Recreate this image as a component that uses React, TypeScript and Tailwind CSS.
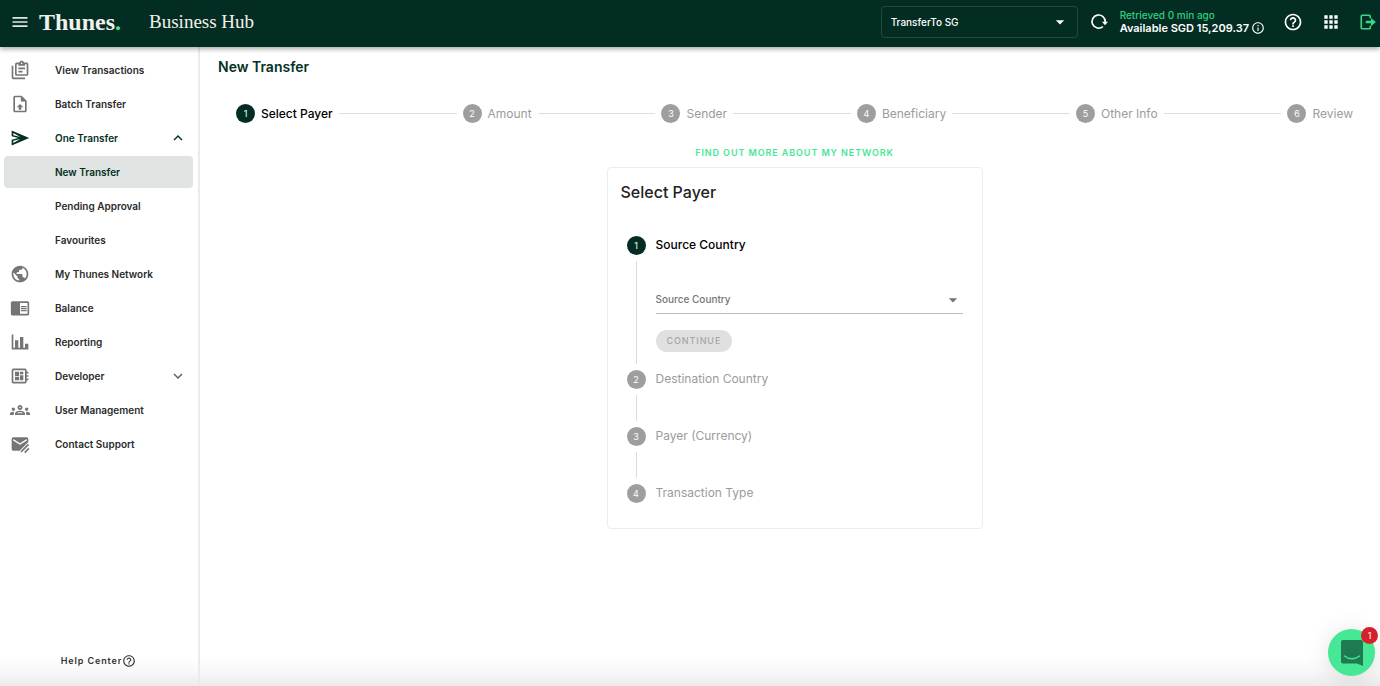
import type { ComponentType, ReactNode } from "react";
import {
  MdMenu,
  MdOutlineSend,
  MdPublic,
  MdChromeReaderMode,
  MdOutlineDeveloperBoard,
  MdOutlineGroups,
  MdApps,
  MdArrowDropDown,
  MdHelpOutline,
  MdInfoOutline,
  MdExpandLess,
  MdExpandMore,
} from "react-icons/md";

type IconProps = { className?: string };
type Icon = ComponentType<IconProps>;

function Glyph({ className, children }: IconProps & { children: ReactNode }) {
  return (
    <svg viewBox="0 0 24 24" fill="currentColor" aria-hidden="true" className={className}>
      {children}
    </svg>
  );
}

const ClipboardsIcon: Icon = ({ className }) => (
  <Glyph className={className}>
    <path d="M4,7V21H18V23H4A2,2 0 0,1 2,21V7H4M20,3A2,2 0 0,1 22,5V17A2,2 0 0,1 20,19H8A2,2 0 0,1 6,17V5A2,2 0 0,1 8,3H11.18C11.6,1.84 12.7,1 14,1C15.3,1 16.4,1.84 16.82,3H20M14,3A1,1 0 0,0 13,4A1,1 0 0,0 14,5A1,1 0 0,0 15,4A1,1 0 0,0 14,3M10,7V5H8V17H20V5H18V7M15,15H10V13H15M18,11H10V9H18V11Z" />
  </Glyph>
);

const FileUploadIcon: Icon = ({ className }) => (
  <Glyph className={className}>
    <path d="M14,2L20,8V20A2,2 0 0,1 18,22H6A2,2 0 0,1 4,20V4A2,2 0 0,1 6,2H14M18,20V9H13V4H6V20H18M12,12L16,16H13.5V19H10.5V16H8L12,12Z" />
  </Glyph>
);

const SendIcon: Icon = ({ className }) => (
  <Glyph className={className}>
    <path d="M2 3 23 12 2 21v-7l8-2-8-2ZM4 6v2.600l8.500 2.100ZM4 18v-2.600l8.500-2.100Z" fillRule="evenodd" />
  </Glyph>
);

const ChartIcon: Icon = ({ className }) => (
  <Glyph className={className}>
    <path d="M22,21H2V3H4V19H6V10H10V19H12V6H16V19H18V14H22V21Z" />
  </Glyph>
);

const MailEditIcon: Icon = ({ className }) => (
  <Glyph className={className}>
    <path d="M4 4h16a2 2 0 0 1 2 2v3.5L11.5 20H4a2 2 0 0 1-2-2V6a2 2 0 0 1 2-2Zm0 2v2l8 5 8-5V6l-8 5-8-5Z" fillRule="evenodd" />
    <path d="M13.2 21.5 22.2 12.5M17.6 22.3 22.6 17.3" stroke="currentColor" strokeWidth="2" fill="none" />
  </Glyph>
);

const RefreshIcon: Icon = ({ className }) => (
  <Glyph className={className}>
    <path d="M17.2 18.2A8.8 8.8 0 1 1 20.3 12" fill="none" stroke="currentColor" strokeWidth="2.2" />
    <path d="M16 11.5h8l-4 4.8Z" />
  </Glyph>
);

const LogoutIcon: Icon = ({ className }) => (
  <Glyph className={className}>
    <path d="M15 7V4.5A1.5 1.5 0 0 0 13.5 3H4.5A1.5 1.5 0 0 0 3 4.5v15A1.5 1.5 0 0 0 4.5 21h9a1.5 1.5 0 0 0 1.5-1.5V17" fill="none" stroke="currentColor" strokeWidth="2.2" />
    <path d="M9 10.3h7V6.5l6.5 5.5-6.5 5.5v-3.8H9Z" />
  </Glyph>
);

type NavItem = {
  label: string;
  icon?: Icon;
  tone?: "brand";
  selected?: boolean;
  chevron?: "up" | "down";
};

const navItems: NavItem[] = [
  { label: "View Transactions", icon: ClipboardsIcon },
  { label: "Batch Transfer", icon: FileUploadIcon },
  { label: "One Transfer", icon: SendIcon, tone: "brand", chevron: "up" },
  { label: "New Transfer", tone: "brand", selected: true },
  { label: "Pending Approval" },
  { label: "Favourites" },
  { label: "My Thunes Network", icon: MdPublic },
  { label: "Balance", icon: MdChromeReaderMode },
  { label: "Reporting", icon: ChartIcon },
  { label: "Developer", icon: MdOutlineDeveloperBoard, chevron: "down" },
  { label: "User Management", icon: MdOutlineGroups },
  { label: "Contact Support", icon: MailEditIcon },
];

function NavList({ items }: { items: NavItem[] }) {
  return (
    <ul className="flex flex-col gap-0.5">
      {items.map((item) => {
        const ItemIcon = item.icon;
        const brand = item.tone === "brand";
        return (
          <li key={item.label}>
            <a
              href="#"
              aria-current={item.selected ? "page" : undefined}
              className={`flex h-8 items-center rounded-[4px] px-1.5 ${item.selected ? "bg-[#e0e4e3]" : ""} ${brand ? "text-[#043024]" : "text-[#2b2b2b]"}`}
            >
              <span className={`flex w-[45px] shrink-0 ${brand ? "text-[#043024]" : "text-[#757575]"}`}>
                {ItemIcon && <ItemIcon className="size-5" />}
              </span>
              <span className="grow text-[10px] font-semibold">{item.label}</span>
              {item.chevron === "up" && <MdExpandLess className="size-[18px]" />}
              {item.chevron === "down" && <MdExpandMore className="size-[18px] text-[#616161]" />}
            </a>
          </li>
        );
      })}
    </ul>
  );
}

function StepBadge({ value, active }: { value: number; active?: boolean }) {
  return (
    <span
      className={`flex size-[19px] shrink-0 items-center justify-center rounded-full text-[9px] text-white ${active ? "bg-[#032d23]" : "bg-[#9e9e9e]"}`}
    >
      {value}
    </span>
  );
}

const steps = ["Select Payer", "Amount", "Sender", "Beneficiary", "Other Info", "Review"];

function Stepper() {
  return (
    <ol className="flex items-center px-[18px]">
      {steps.map((label, i) => (
        <li key={label} className={`flex items-center ${i < steps.length - 1 ? "grow" : ""}`}>
          <StepBadge value={i + 1} active={i === 0} />
          <span className={`ml-1.5 text-[12px] leading-4 whitespace-nowrap ${i === 0 ? "font-medium text-black" : "text-[#9b9b9b]"}`}>
            {label}
          </span>
          {i < steps.length - 1 && <span className="mx-1.5 h-px grow bg-[#dedede]" />}
        </li>
      ))}
    </ol>
  );
}

type PayerStepProps = {
  value: number;
  label: string;
  active?: boolean;
  last?: boolean;
  children?: ReactNode;
};

function PayerStep({ value, label, active, last, children }: PayerStepProps) {
  return (
    <li className="flex gap-2.5">
      <div className="flex flex-col items-center">
        <StepBadge value={value} active={active} />
        {!last && <span className="my-1.5 w-px grow bg-[#dcdcdc]" />}
      </div>
      <div className={`grow ${last ? "" : "min-h-[57px]"}`}>
        <h3 className={`text-[12px] leading-[18px] ${active ? "font-medium text-black" : "text-[#9b9b9b]"}`}>{label}</h3>
        {children}
      </div>
    </li>
  );
}

export default function App() {
  return (
    <div className="flex min-h-screen flex-col bg-[linear-gradient(to_top,#ebebeb,#f8f8f8_14px,#ffffff_30px)] font-['Inter',sans-serif] text-[#212121]">
      <header className="z-10 flex h-[47px] items-center bg-[#032d23] pr-[3px] pb-[3px] pl-2.5 text-white shadow-[0_2px_5px_rgba(0,0,0,0.35)]">
        <button aria-label="Open menu" className="mr-[9px] text-[#dfe5e3]">
          <MdMenu className="size-5" />
        </button>
        <a href="#" className="font-['Liberation_Serif',serif] text-[24px] leading-8 font-bold text-[#f1f1ec]">
          Thunes<span className="text-[#46e795]">.</span>
        </a>
        <span className="ml-7 grow font-['Liberation_Serif',serif] text-[19px] text-[#f1f1ec]">Business Hub</span>
        <div className="relative mr-3 w-[197px]">
          <select aria-label="Account" className="block h-8 w-full appearance-none rounded-[4px] border border-[#27483f] bg-transparent px-[9px] text-[10px] font-medium">
            <option>TransferTo SG</option>
          </select>
          <MdArrowDropDown className="pointer-events-none absolute top-1.5 right-2 size-5" />
        </div>
        <button aria-label="Refresh balance" className="mr-3">
          <RefreshIcon className="size-[18px]" />
        </button>
        <div className="mr-[18px] font-semibold">
          <p className="text-[10px] leading-3 font-medium text-[#2fce80]">Retrieved 0 min ago</p>
          <p className="flex items-center gap-0.5 text-[11px] leading-3">
            Available SGD 15,209.37
            <MdInfoOutline className="size-3.5" />
          </p>
        </div>
        <div className="flex items-center gap-[18px]">
          <button aria-label="Help"><MdHelpOutline className="size-5" /></button>
          <button aria-label="Apps"><MdApps className="size-5" /></button>
          <button aria-label="Log out" className="text-[#36d986]"><LogoutIcon className="size-[18px]" /></button>
        </div>
      </header>

      <div className="flex grow">
        <nav className="flex w-[200px] shrink-0 flex-col border-r-2 border-[#ebebeb] pt-[7px] pr-[5px] pl-1">
          <NavList items={navItems} />
          <a href="#" className="mt-auto mb-[18px] flex items-center self-center text-[9px] font-semibold tracking-widest text-[#333]">
            Help Center
            <MdHelpOutline className="size-3.5" />
          </a>
        </nav>

        <main className="grow pt-2.5 pr-[9px] pl-[18px]">
          <h1 className="mb-[27px] text-[14px] leading-5 font-semibold text-[#043024]">New Transfer</h1>
          <Stepper />
          <div className="mx-auto mt-6 flex w-[376px] flex-col">
            <a href="#" className="self-center text-[9px] leading-3 font-semibold tracking-widest text-[#46e795]">
              FIND OUT MORE ABOUT MY NETWORK
            </a>
            <section className="mt-2 rounded-[4px] border border-[#ececec] px-[13px] pt-3.5 pb-[25px]">
              <h2 className="text-[16px] leading-5 font-medium">Select Payer</h2>
              <ol className="mt-[34px] px-1.5">
                <PayerStep value={1} label="Source Country" active>
                  <div className="relative mt-8">
                    <select aria-label="Source Country" className="block h-7 w-full appearance-none border-b border-[#bdbdbd] bg-transparent text-[10px] font-medium text-[#757575]">
                      <option>Source Country</option>
                    </select>
                    <MdArrowDropDown className="pointer-events-none absolute top-1 right-0 size-5 text-[#757575]" />
                  </div>
                  <button disabled className="mt-4 mb-[18px] block h-[22px] rounded-full bg-[#e0e0e0] px-[11px] text-[9px] font-medium tracking-widest text-[#a6a6a6]">
                    CONTINUE
                  </button>
                </PayerStep>
                <PayerStep value={2} label="Destination Country" />
                <PayerStep value={3} label="Payer (Currency)" />
                <PayerStep value={4} label="Transaction Type" last />
              </ol>
            </section>
          </div>
        </main>
      </div>

      <button aria-label="Open chat, 1 unread message" className="fixed right-[5px] bottom-2.5 z-20 flex size-[47px] items-center justify-center rounded-full bg-[#46e795] shadow-[0_2px_24px_rgba(0,0,0,0.12)]">
        <svg viewBox="0 0 24 28" className="h-7 w-6" aria-hidden="true">
          <path d="M3 1h18a2 2 0 0 1 2 2v24l-6-2.5H3a2 2 0 0 1-2-2V3a2 2 0 0 1 2-2Z" fill="#1f7a50" />
          <path d="M4.5 17c4.5 3.6 10.5 3.6 15 0" fill="none" stroke="#46e795" strokeWidth="1.5" strokeLinecap="round" />
        </svg>
        <span className="absolute -top-0.5 -right-[3px] flex size-[17px] items-center justify-center rounded-full bg-[#d3222a] text-[9px] text-white">1</span>
      </button>
    </div>
  );
}
